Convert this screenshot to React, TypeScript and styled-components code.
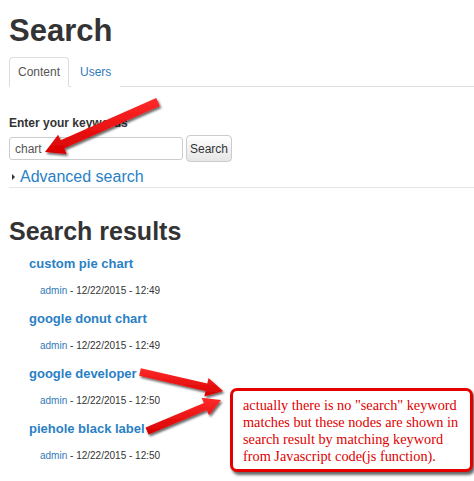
import { FC } from "react";
import styled, { createGlobalStyle } from "styled-components";

const results = [
  { title: "custom pie chart", date: "12/22/2015 - 12:49" },
  { title: "google donut chart", date: "12/22/2015 - 12:49" },
  { title: "google developer", date: "12/22/2015 - 12:50" },
  { title: "piehole black label", date: "12/22/2015 - 12:50" },
];

type Pt = [number, number];

// polygon of a thick arrow from tail to tip
const arrowPoints = (from: Pt, to: Pt, shaft: number, head: number, headLen: number) => {
  const dx = to[0] - from[0];
  const dy = to[1] - from[1];
  const len = Math.hypot(dx, dy);
  const ux = dx / len;
  const uy = dy / len;
  const nx = -uy;
  const ny = ux;
  const bx = to[0] - ux * headLen;
  const by = to[1] - uy * headLen;
  const p = (x: number, y: number) => `${x.toFixed(1)},${y.toFixed(1)}`;
  return [
    p(from[0] + nx * shaft, from[1] + ny * shaft),
    p(bx + nx * shaft, by + ny * shaft),
    p(bx + nx * head, by + ny * head),
    p(to[0], to[1]),
    p(bx - nx * head, by - ny * head),
    p(bx - nx * shaft, by - ny * shaft),
    p(from[0] - nx * shaft, from[1] - ny * shaft),
  ].join(" ");
};

const arrows: { from: Pt; to: Pt; shaft: number; head: number; headLen: number }[] = [
  { from: [158, 102], to: [45, 152], shaft: 4.4, head: 10.5, headLen: 19 },
  { from: [140, 372], to: [223, 391], shaft: 3.8, head: 9.5, headLen: 17 },
  { from: [147, 431], to: [221, 400], shaft: 3.8, head: 9.5, headLen: 17 },
];

const App: FC = () => {
  return (
    <>
      <GlobalStyle />
      <Page>
        <Title>Search</Title>
        <Tabs>
          <Tab $active>Content</Tab>
          <Tab>Users</Tab>
        </Tabs>

        <SearchForm>
          <Label>Enter your keywords</Label>
          <SearchRow>
            <KeywordInput defaultValue="chart" />
            <SearchButton>Search</SearchButton>
          </SearchRow>
          <Advanced>
            <Caret />
            Advanced search
          </Advanced>
        </SearchForm>

        <ResultsTitle>Search results</ResultsTitle>
        <ResultList>
          {results.map((r) => (
            <ResultItem key={r.title}>
              <ResultTitle>{r.title}</ResultTitle>
              <Meta>
                <Author>admin</Author> - {r.date}
              </Meta>
            </ResultItem>
          ))}
        </ResultList>
      </Page>

      <ArrowLayer width="474" height="481">
        <defs>
          <linearGradient id="red" x1="0" y1="0" x2="0" y2="1">
            <stop offset="0" stopColor="#ff2a2a" />
            <stop offset="1" stopColor="#d80000" />
          </linearGradient>
          <filter id="shadow" x="-20%" y="-20%" width="140%" height="160%">
            <feDropShadow dx="1.5" dy="2" stdDeviation="1.3" floodColor="#000" floodOpacity="0.6" />
          </filter>
        </defs>
        {arrows.map((a, i) => (
          <polygon
            key={i}
            points={arrowPoints(a.from, a.to, a.shaft, a.head, a.headLen)}
            fill="url(#red)"
            filter="url(#shadow)"
          />
        ))}
      </ArrowLayer>

      <Note>
        actually there is no "search" keyword matches but these nodes are shown in search result by
        matching keyword from Javascript code(js function).
      </Note>
    </>
  );
};

const GlobalStyle = createGlobalStyle`
  body {
    margin: 0;
    background: #fff;
    font-family: "Liberation Sans", Arial, sans-serif;
    color: #333;
  }
`;

const Page = styled.div`
  padding: 14px 0 0 9px;
  width: 465px;
  height: 467px;
  overflow: hidden;
`;

const Title = styled.h1`
  margin: 0 0 9px;
  font-size: 31px;
  line-height: 34px;
  font-weight: 700;
  color: #333;
`;

const Tabs = styled.div`
  display: flex;
  height: 29px;
  border-bottom: 1px solid #ddd;
`;

const Tab = styled.div<{ $active?: boolean }>`
  display: flex;
  align-items: center;
  padding: 0 8px;
  margin-right: 2px;
  font-size: 12px;
  color: ${({ $active }) => ($active ? "#555" : "#337ab7")};
  background: #fff;
  border: 1px solid ${({ $active }) => ($active ? "#ddd" : "transparent")};
  border-bottom-color: ${({ $active }) => ($active ? "#fff" : "transparent")};
  border-radius: 4px 4px 0 0;
  margin-bottom: -1px;
`;

const SearchForm = styled.div`
  padding-top: 29px;
  padding-bottom: 0;
  border-bottom: 1px solid #e5e5e5;
`;

const Label = styled.div`
  font-size: 12px;
  font-weight: 700;
  line-height: 14px;
  margin-bottom: 5px;
`;

const SearchRow = styled.div`
  display: flex;
  align-items: center;
  gap: 3px;
`;

const KeywordInput = styled.input`
  box-sizing: border-box;
  width: 174px;
  height: 23px;
  padding: 0 5px;
  border: 1px solid #ccc;
  border-radius: 3px;
  font-family: inherit;
  font-size: 12px;
  color: #555;
  outline: none;
`;

const SearchButton = styled.button`
  box-sizing: border-box;
  width: 46px;
  height: 27px;
  padding: 0;
  border: 1px solid #ccc;
  border-radius: 4px;
  background: linear-gradient(#fff, #e6e6e6);
  font-family: inherit;
  font-size: 12px;
  color: #333;
`;

const Advanced = styled.a`
  display: flex;
  align-items: center;
  margin-top: 5px;
  padding-left: 3px;
  font-size: 16px;
  line-height: 20px;
  color: #2a7fc4;
`;

const Caret = styled.span`
  width: 0;
  height: 0;
  margin-right: 5px;
  border-top: 3px solid transparent;
  border-bottom: 3px solid transparent;
  border-left: 3px solid #333;
`;

const ResultsTitle = styled.h2`
  margin: 28px 0 10px;
  font-size: 25px;
  line-height: 30px;
  font-weight: 700;
`;

const ResultList = styled.div`
  display: flex;
  flex-direction: column;
  padding-left: 20px;
`;

const ResultItem = styled.div`
  height: 55px;
`;

const ResultTitle = styled.a`
  display: block;
  font-size: 13px;
  line-height: 16px;
  font-weight: 700;
  color: #2a7fc4;
`;

const Meta = styled.div`
  margin-top: 13px;
  padding-left: 11px;
  font-size: 10px;
  line-height: 12px;
  color: #333;
`;

const Author = styled.span`
  color: #337ab7;
`;

const ArrowLayer = styled.svg`
  position: absolute;
  left: 0;
  top: 0;
  pointer-events: none;
`;

const Note = styled.div`
  position: absolute;
  left: 230px;
  top: 388px;
  box-sizing: border-box;
  width: 243px;
  height: 84px;
  padding: 6px 6px 0 10px;
  border: 3px solid #e50000;
  border-radius: 7px;
  background: #fff;
  box-shadow: 2px 3px 3px rgba(0, 0, 0, 0.6);
  font-family: "Liberation Serif", "Times New Roman", serif;
  font-size: 14.3px;
  line-height: 17px;
  color: #e00000;
`;

export default App;
